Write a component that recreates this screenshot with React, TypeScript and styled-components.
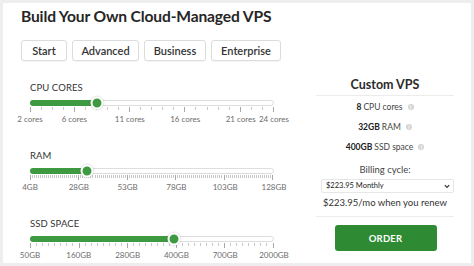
import React from "react";
import styled, { createGlobalStyle } from "styled-components";

const GlobalStyle = createGlobalStyle`
  html, body {
    margin: 0;
    padding: 0;
    background: #eeeeee;
  }
  body {
    font-family: Lato, "Noto Sans", sans-serif;
    color: #2b2b2b;
  }
`;

const Card = styled.div`
  margin: 3px 0 0 3px;
  width: 468px;
  height: 260px;
  background: #fff;
  box-sizing: border-box;
  padding: 3px 0 0 18px;
  display: flex;
  flex-direction: column;
`;

const Title = styled.h1`
  margin: 0;
  font-size: 15.6px;
  line-height: 20px;
  font-weight: 700;
  letter-spacing: -0.15px;
  color: #262626;
`;

const PlanRow = styled.div`
  display: flex;
  gap: 5px;
  margin-top: 14px;
`;

const PlanButton = styled.button<{ $w: number }>`
  width: ${(p) => p.$w}px;
  height: 21px;
  padding: 0;
  background: #fff;
  border: 1px solid #dcdcdc;
  border-radius: 3px;
  font-family: Lato, "Noto Sans", sans-serif;
  font-size: 11px;
  font-weight: 600;
  color: #333;
  box-shadow: 0 1px 1px rgba(0, 0, 0, 0.04);
`;

const Body = styled.div`
  display: grid;
  grid-template-columns: 295px 138px;
  flex: 1;
`;

const Sliders = styled.div`
  padding: 21px 0 0 9px;
  display: flex;
  flex-direction: column;
  gap: 25px;
`;

const Section = styled.div`
  width: 244px;
  display: flex;
  flex-direction: column;
`;

const SectionLabel = styled.div`
  font-size: 9.5px;
  line-height: 12px;
  color: #333;
  letter-spacing: 0.1px;
`;

const Track = styled.div`
  position: relative;
  margin-top: 6px;
  height: 6px;
  box-sizing: border-box;
  border: 1px solid #dedede;
  border-radius: 3px;
  background: #fff;
`;

const Fill = styled.div`
  position: absolute;
  left: -1px;
  top: -1px;
  height: 6px;
  border-radius: 3px;
  background: #3d9a41;
`;

const Thumb = styled.div`
  position: absolute;
  top: 50%;
  width: 9px;
  height: 9px;
  border-radius: 50%;
  background: #3d9a41;
  border: 2px solid #fff;
  box-shadow: 0 0 2px rgba(0, 0, 0, 0.25);
  transform: translate(-50%, -50%);
`;

const Ticks = styled.div`
  display: flex;
  justify-content: space-between;
  align-items: flex-start;
  height: 6px;
  padding-top: 1px;
`;

const Tick = styled.span<{ $major: boolean }>`
  width: 1px;
  height: ${(p) => (p.$major ? 5 : 3)}px;
  background: ${(p) => (p.$major ? "#a8a8a8" : "#c8c8c8")};
`;

const Scale = styled.div`
  position: relative;
  height: 11px;
  margin-top: 1px;
`;

const ScaleLabel = styled.span`
  position: absolute;
  top: 0;
  transform: translateX(-50%);
  font-size: 8px;
  line-height: 11px;
  color: #6d6d6d;
  white-space: nowrap;
`;

const Panel = styled.div`
  padding-top: 16px;
  display: flex;
  flex-direction: column;
  align-items: stretch;
  text-align: center;
`;

const PanelTitle = styled.div`
  font-size: 12.5px;
  line-height: 16px;
  font-weight: 700;
  color: #2b2b2b;
  padding-bottom: 2px;
  border-bottom: 1px solid #ececec;
`;

const Specs = styled.div`
  margin-top: 1px;
  display: flex;
  flex-direction: column;
`;

const Spec = styled.div`
  line-height: 20px;
  font-size: 8.5px;
  color: #444;
  display: flex;
  justify-content: center;
  align-items: center;
  gap: 2px;
  b {
    font-weight: 700;
    color: #222;
  }
`;

const Info = styled.span`
  display: inline-flex;
  align-items: center;
  justify-content: center;
  width: 6px;
  height: 6px;
  margin-left: 3px;
  border-radius: 50%;
  background: #d4d4d4;
  color: #fff;
  font-size: 5px;
  font-weight: 700;
  line-height: 1;
`;

const BillingLabel = styled.div`
  margin-top: 6px;
  font-size: 9.5px;
  line-height: 14px;
  color: #444;
`;

const SelectWrap = styled.div`
  position: relative;
  margin: 2px 0 0 5px;
  height: 14px;
`;

const Select = styled.select`
  display: block;
  appearance: none;
  width: 100%;
  height: 14px;
  margin: 0;
  padding: 0 0 0 4px;
  box-sizing: border-box;
  border: 1px solid #e6e6e6;
  border-radius: 2px;
  background: #fff;
  font-family: Lato, "Noto Sans", sans-serif;
  font-size: 7.5px;
  line-height: 12px;
  color: #222;
  outline: none;
`;

const Chevron = styled.svg`
  position: absolute;
  right: 4px;
  top: 5px;
  pointer-events: none;
`;

const Renew = styled.div`
  margin-top: 3px;
  font-size: 9.5px;
  line-height: 14px;
  color: #333;
  padding-bottom: 6px;
  border-bottom: 1px solid #ececec;
`;

const OrderButton = styled.button`
  align-self: center;
  margin: 8px 0 0 1px;
  width: 102px;
  height: 26px;
  border: none;
  border-radius: 3px;
  background: #2e8b34;
  color: #fff;
  font-family: Lato, "Noto Sans", sans-serif;
  font-size: 9.5px;
  font-weight: 700;
  letter-spacing: 0.2px;
`;

type SliderProps = {
  label: string;
  pct: number;
  ticks: number;
  major: number[];
  labels: { text: string; at: number }[];
};

const Slider = ({ label, pct, ticks, major, labels }: SliderProps) => (
  <Section>
    <SectionLabel>{label}</SectionLabel>
    <Track>
      <Fill style={{ width: `${pct * 100}%` }} />
      <Thumb style={{ left: `${pct * 100}%` }} />
    </Track>
    <Ticks>
      {Array.from({ length: ticks }, (_, i) => (
        <Tick key={i} $major={major.includes(i)} />
      ))}
    </Ticks>
    <Scale>
      {labels.map((l) => (
        <ScaleLabel key={l.text} style={{ left: `${l.at * 100}%` }}>
          {l.text}
        </ScaleLabel>
      ))}
    </Scale>
  </Section>
);

const even = (names: string[]) =>
  names.map((text, i) => ({ text, at: i / (names.length - 1) }));

export default function App() {
  const cpuLabels = [2, 6, 11, 16, 21, 24].map((v) => ({
    text: `${v} cores`,
    at: (v - 2) / 22,
  }));

  return (
    <>
      <GlobalStyle />
      <Card>
        <Title>Build Your Own Cloud-Managed VPS</Title>
        <PlanRow>
          <PlanButton $w={46}>Start</PlanButton>
          <PlanButton $w={67}>Advanced</PlanButton>
          <PlanButton $w={62}>Business</PlanButton>
          <PlanButton $w={70}>Enterprise</PlanButton>
        </PlanRow>
        <Body>
          <Sliders>
            <Slider
              label="CPU CORES"
              pct={6 / 22}
              ticks={23}
              major={[0, 4, 9, 14, 19, 22]}
              labels={cpuLabels}
            />
            <Slider
              label="RAM"
              pct={0.232}
              ticks={121}
              major={[0, 24, 48, 72, 96, 120]}
              labels={even(["4GB", "28GB", "53GB", "78GB", "103GB", "128GB"])}
            />
            <Slider
              label="SSD SPACE"
              pct={0.59}
              ticks={41}
              major={[0, 8, 16, 24, 32, 40]}
              labels={even(["50GB", "160GB", "280GB", "400GB", "700GB", "2000GB"])}
            />
          </Sliders>
          <Panel>
            <PanelTitle>Custom VPS</PanelTitle>
            <Specs>
              <Spec>
                <b>8</b> CPU cores <Info>i</Info>
              </Spec>
              <Spec>
                <b>32GB</b> RAM <Info>i</Info>
              </Spec>
              <Spec>
                <b>400GB</b> SSD space <Info>i</Info>
              </Spec>
            </Specs>
            <BillingLabel>Billing cycle:</BillingLabel>
            <SelectWrap>
              <Select defaultValue="monthly">
                <option value="monthly">$223.95 Monthly</option>
              </Select>
              <Chevron width="6" height="5" viewBox="0 0 6 5">
                <path d="M0.8 1.2 L3 3.5 L5.2 1.2" fill="none" stroke="#333" strokeWidth="1.2" />
              </Chevron>
            </SelectWrap>
            <Renew>$223.95/mo when you renew</Renew>
            <OrderButton>ORDER</OrderButton>
          </Panel>
        </Body>
      </Card>
    </>
  );
}
